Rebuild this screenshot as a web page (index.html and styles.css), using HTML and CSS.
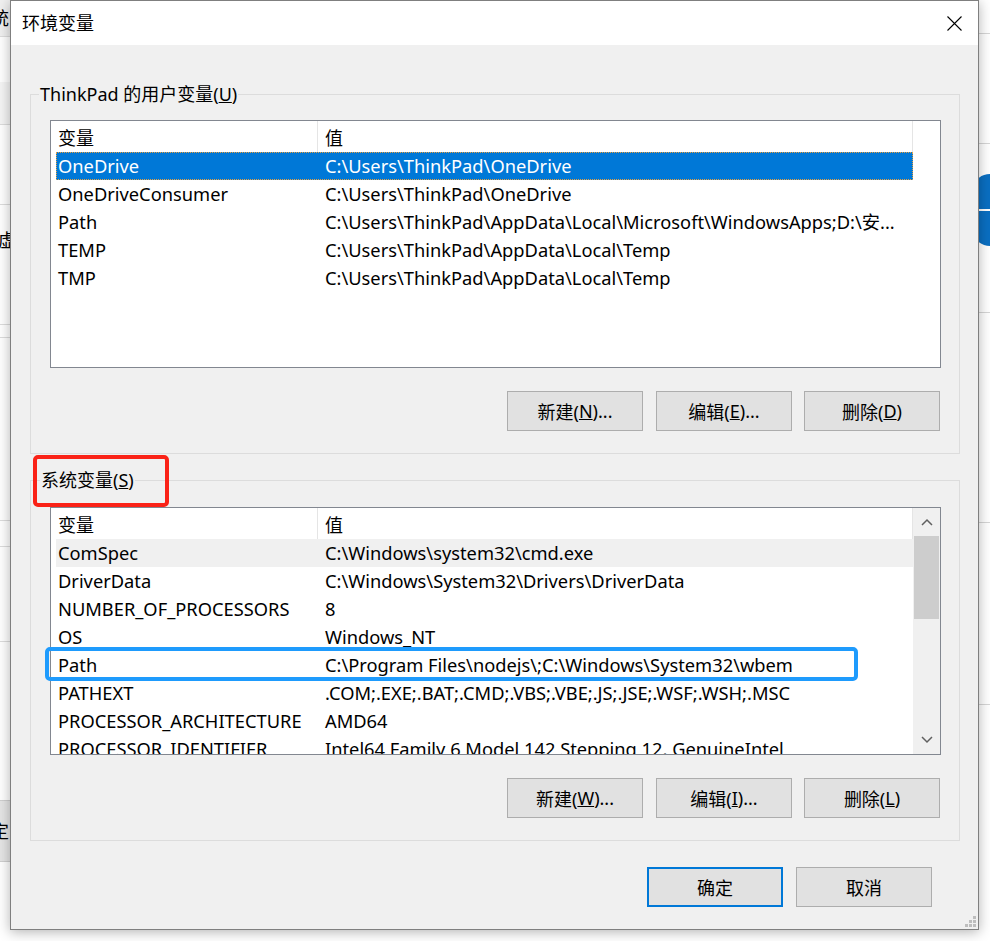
FILE: index.html
```html
<!DOCTYPE html>
<html lang="zh-CN">
  <head>
    <meta charset="UTF-8" />
    <title>环境变量</title>
    <link rel="stylesheet" href="styles.css">
  </head>
  <body>
    <div class="desk">
      <!-- window behind, left edge -->
      <div class="back-left">
        <div class="seg" style="height: 37px"><span class="r">统</span></div>
        <div class="seg plain" style="height: 45px"></div>
        <div class="seg shade" style="height: 43px"></div>
        <div class="seg" style="height: 80px"><span class="r">限。</span></div>
        <div class="seg plain" style="height: 70px"><span class="l">虚</span></div>
        <div class="seg" style="height: 50px"></div>
        <div class="seg" style="height: 13px"></div>
        <div class="seg" style="height: 183px"></div>
        <div class="seg" style="height: 26px"></div>
        <div class="seg" style="height: 95px"></div>
        <div class="seg plain" style="height: 158px"></div>
        <div class="seg btnish" style="height: 62px"><span class="r">定</span></div>
      </div>

      <div class="dialog">
        <div class="titlebar">
          <span class="title">环境变量</span>
          <svg class="close" width="15" height="15" viewBox="0 0 15 15">
            <path d="M0.5 0.5 L14.5 14.5 M14.5 0.5 L0.5 14.5" stroke="#000" stroke-width="1.1" fill="none" />
          </svg>
        </div>

        <div class="body">
          <fieldset class="group">
            <legend>ThinkPad 的用户变量(<u>U</u>)</legend>
            <div class="list">
              <div class="cols">
                <div class="head">
                  <div class="c1">变量</div>
                  <div class="c2">值</div>
                </div>
                <div class="row selected"><div class="c1">OneDrive</div><div class="c2">C:\Users\ThinkPad\OneDrive</div></div>
                <div class="row"><div class="c1">OneDriveConsumer</div><div class="c2">C:\Users\ThinkPad\OneDrive</div></div>
                <div class="row"><div class="c1">Path</div><div class="c2">C:\Users\ThinkPad\AppData\Local\Microsoft\WindowsApps;D:\安...</div></div>
                <div class="row"><div class="c1">TEMP</div><div class="c2">C:\Users\ThinkPad\AppData\Local\Temp</div></div>
                <div class="row"><div class="c1">TMP</div><div class="c2">C:\Users\ThinkPad\AppData\Local\Temp</div></div>
              </div>
            </div>
            <div class="buttons">
              <button class="btn">新建(<u>N</u>)...</button>
              <button class="btn">编辑(<u>E</u>)...</button>
              <button class="btn">删除(<u>D</u>)</button>
            </div>
          </fieldset>

          <fieldset class="group system">
            <legend>系统变量(<u>S</u>)</legend>
            <div class="list">
              <div class="cols">
                <div class="head">
                  <div class="c1">变量</div>
                  <div class="c2">值</div>
                </div>
                <div class="row hover"><div class="c1">ComSpec</div><div class="c2">C:\Windows\system32\cmd.exe</div></div>
                <div class="row"><div class="c1">DriverData</div><div class="c2">C:\Windows\System32\Drivers\DriverData</div></div>
                <div class="row"><div class="c1">NUMBER_OF_PROCESSORS</div><div class="c2">8</div></div>
                <div class="row"><div class="c1">OS</div><div class="c2">Windows_NT</div></div>
                <div class="row"><div class="c1">Path</div><div class="c2">C:\Program Files\nodejs\;C:\Windows\System32\wbem</div></div>
                <div class="row"><div class="c1">PATHEXT</div><div class="c2">.COM;.EXE;.BAT;.CMD;.VBS;.VBE;.JS;.JSE;.WSF;.WSH;.MSC</div></div>
                <div class="row"><div class="c1">PROCESSOR_ARCHITECTURE</div><div class="c2">AMD64</div></div>
                <div class="row"><div class="c1">PROCESSOR_IDENTIFIER</div><div class="c2">Intel64 Family 6 Model 142 Stepping 12, GenuineIntel</div></div>
              </div>
              <div class="scroll">
                <div class="arrow">
                  <svg width="12" height="8" viewBox="0 0 12 8"><path d="M1 7 L6 2 L11 7" stroke="#606060" stroke-width="1.5" fill="none" /></svg>
                </div>
                <div class="thumb"></div>
                <div class="track"></div>
                <div class="arrow">
                  <svg width="12" height="8" viewBox="0 0 12 8"><path d="M1 1 L6 6 L11 1" stroke="#606060" stroke-width="1.5" fill="none" /></svg>
                </div>
              </div>
            </div>
            <div class="buttons">
              <button class="btn">新建(<u>W</u>)...</button>
              <button class="btn">编辑(<u>I</u>)...</button>
              <button class="btn">删除(<u>L</u>)</button>
            </div>
          </fieldset>

          <div class="footer">
            <button class="btn default">确定</button>
            <button class="btn">取消</button>
          </div>
        </div>

        <svg class="grip" width="12" height="12" viewBox="0 0 12 12">
          <rect x="8" y="0" width="3" height="3" fill="#bdbdbd" />
          <rect x="4" y="4" width="3" height="3" fill="#bdbdbd" />
          <rect x="8" y="4" width="3" height="3" fill="#bdbdbd" />
          <rect x="0" y="8" width="3" height="3" fill="#bdbdbd" />
          <rect x="4" y="8" width="3" height="3" fill="#bdbdbd" />
          <rect x="8" y="8" width="3" height="3" fill="#bdbdbd" />
        </svg>

        <!-- annotations drawn on the screenshot -->
        <div class="mark red"></div>
        <div class="mark blue"></div>
      </div>

      <!-- window behind, right edge -->
      <div class="back-right">
        <div class="seg" style="height: 34px"></div>
        <div class="seg" style="height: 110px"></div>
        <div class="seg" style="height: 139px"><div class="disc"></div></div>
        <div class="seg" style="height: 210px"></div>
        <div class="seg" style="height: 182px"></div>
      </div>
    </div>
  </body>
</html>
```

FILE: styles.css
```css
* {
  box-sizing: border-box;
}
body {
  margin: 0;
  width: 990px;
  height: 941px;
  overflow: hidden;
  background: #fff;
  color: #000;
  font-family: "Noto Sans", "Noto Sans CJK SC", sans-serif;
  font-size: 18px;
}
.desk {
  display: flex;
  height: 941px;
}

/* background windows */
.back-left {
  width: 10px;
  flex: none;
  overflow: hidden;
  background: #fff;
}
.back-left .seg {
  display: flex;
  align-items: center;
  justify-content: flex-end;
  border-bottom: 1px solid #dcdcdc;
  white-space: nowrap;
  line-height: 1;
}
.back-left .seg:first-child {
  background: #f0f0f0;
}
.back-left .plain {
  border-bottom: none;
}
.back-left .shade {
  background: #f5f5f5;
}
.back-left .btnish {
  background: #e5e5e5;
  border-top: 1px solid #cfcfcf;
  border-bottom: 1px solid #cfcfcf;
}
.back-left .r {
  margin-right: 1px;
}
.back-left .l {
  margin-right: -6px;
}
.back-right {
  flex: 1;
  overflow: hidden;
  background: #fff;
}
.back-right .seg {
  border-bottom: 1px solid #d6d6d6;
}
.disc {
  margin-top: 30px;
  margin-left: -6px;
  height: 72px;
  background: linear-gradient(#0a6fc2 0, #0a6fc2 35px, #fff 35px, #fff 37px, #0a6fc2 37px);
  border-radius: 40px 0 0 40px / 36px 0 0 36px;
}

/* dialog */
.dialog {
  width: 969px;
  height: 930px;
  flex: none;
  position: relative;
  z-index: 1;
  display: flex;
  flex-direction: column;
  background: #f0f0f0;
  border: 1px solid #7f7f7f;
  box-shadow: 0 2px 12px rgba(0, 0, 0, 0.3);
}
.titlebar {
  height: 44px;
  flex: none;
  display: flex;
  align-items: center;
  justify-content: space-between;
  padding: 0 16px 0 11px;
  background: #fff;
}
.title {
  font-size: 18px;
  line-height: 24px;
}
.close {
  display: block;
  margin-top: 1px;
}
.body {
  padding: 0 18px 0 19px;
}
.group {
  min-width: 0;
  margin: 37px 0 0;
  padding: 14px 18px 22px 19px;
  border: 1px solid #dcdcdc;
}
.group legend {
  margin-left: -11px;
  padding: 0 1px;
  line-height: 24px;
}
.group.system {
  margin-top: 14px;
  padding-top: 15px;
}
.group.system legend {
  margin-left: -10px;
}
.list {
  display: flex;
  height: 248px;
  overflow: hidden;
  background: #fff;
  border: 1px solid #828790;
}
.cols {
  width: 862px;
  flex: none;
}
.head {
  display: flex;
  height: 31px;
}
.head .c1,
.head .c2 {
  display: flex;
  align-items: center;
  border-right: 1px solid #e5e5e5;
}
.head .c1 {
  width: 267px;
  padding-left: 7px;
}
.head .c2 {
  width: 595px;
  padding-left: 7px;
}
.row {
  display: flex;
  width: 857px;
  height: 28px;
  margin-left: 5px;
  font-size: 18.3px;
  line-height: 28px;
  white-space: nowrap;
}
.row .c1 {
  width: 262px;
  padding-left: 2px;
}
.row .c2 {
  flex: 1;
  padding-left: 7px;
  overflow: hidden;
}
.row.selected {
  background: #0078d7;
  color: #fff;
  outline: 1px dotted #e8a040;
  outline-offset: -1px;
}
.row.hover {
  background: #f0f0f0;
}
.scroll {
  flex: 1;
  display: flex;
  flex-direction: column;
  background: #f0f0f0;
}
.scroll .arrow {
  height: 28px;
  display: flex;
  align-items: center;
  justify-content: center;
}
.scroll .arrow svg {
  display: block;
}
.scroll .thumb {
  height: 83px;
  margin: 0 1px;
  background: #cdcdcd;
}
.scroll .track {
  flex: 1;
}
.buttons {
  display: flex;
  justify-content: flex-end;
  gap: 12px;
  margin-top: 23px;
  padding-right: 1px;
}
.buttons .btn:first-child {
  margin-right: 1px;
}
.btn {
  width: 136px;
  height: 40px;
  display: flex;
  align-items: center;
  justify-content: center;
  padding: 0;
  background: #e1e1e1;
  border: 1px solid #adadad;
  color: #000;
  font-family: inherit;
  font-size: 18px;
}
.btn.default {
  border: 2px solid #0078d7;
}
.footer {
  display: flex;
  justify-content: flex-end;
  gap: 13px;
  margin-top: 26px;
  padding-right: 28px;
}
.grip {
  position: absolute;
  right: 1px;
  bottom: 1px;
}
.mark {
  position: absolute;
  border-radius: 5px;
}
.mark.red {
  left: 22px;
  top: 454px;
  width: 136px;
  height: 52px;
  border: 4px solid #fa2217;
}
.mark.blue {
  left: 34px;
  top: 646px;
  width: 813px;
  height: 34px;
  border: 4px solid #1e9bfd;
}
```
